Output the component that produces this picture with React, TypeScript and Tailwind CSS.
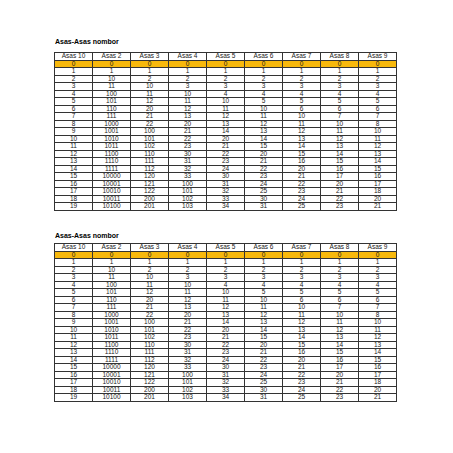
const bases = [10, 2, 3, 4, 5, 6, 7, 8, 9]

// kolum asas 2 ikut jadual asal
const asasDua = ['0', '1', '10', '11', '100', '101', '110', '111', '1000', '1001', '1010', '1011', '1100', '1110', '1111', '10000', '10001', '10010', '10011', '10100']

const nums = Array.from({ length: 20 }, (_, i) => i)

function nilai(n: number, b: number) {
    if (b === 2) return asasDua[n]
    return n.toString(b)
}

const sel = "flex-1 flex items-center justify-center border-r border-b border-[#333] text-[6.5px] leading-[6.5px] text-[#1a1a1a] overflow-hidden"

function Jadual({ rapat }: { rapat?: boolean }) {
    return (
        <div className="flex flex-col">
            <p className="text-[7px] font-bold text-black leading-[7px] pl-[1px]">Asas-Asas nombor</p>
            <div className={`${rapat ? 'mt-[4px]' : 'mt-[7px]'} w-[343px] border-l border-t border-[#333]`}>
                <div className="flex h-[7.5px]">
                    {bases.map(b => (
                        <div key={b} className={sel}>Asas {b}</div>
                    ))}
                </div>
                {nums.map(n => (
                    <div key={n} className={`flex h-[7.5px] ${n === 0 ? 'bg-[#f7b80c]' : 'bg-white'}`}>
                        {bases.map(b => (
                            <div key={b} className={sel}>{nilai(n, b)}</div>
                        ))}
                    </div>
                ))}
            </div>
        </div>
    )
}

export default function App() {
    return (
        <div className="w-[453px] h-[453px] bg-white pl-[54px] pt-[38px] flex flex-col gap-[21.5px] antialiased" style={{ fontFamily: '"Liberation Sans", Arial, sans-serif' }}>
            <Jadual />
            <Jadual rapat />
        </div>
    )
}
